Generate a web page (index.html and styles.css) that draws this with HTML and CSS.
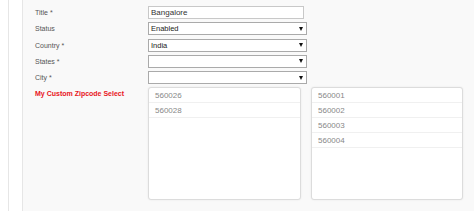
FILE: index.html
```html
<!DOCTYPE html>
<html lang="en">
  <head>
    <meta charset="UTF-8" />
    <meta name="viewport" content="width=device-width, initial-scale=1.0" />
    <title>zipcode select</title>
    <link rel="stylesheet" href="styles.css">
  </head>
  <body>
    <div class="rail">
      <div class="content">
        <div class="form">
          <label class="label">Title *</label>
          <div class="input">Bangalore</div>

          <label class="label">Status</label>
          <div class="select"><span>Enabled</span><i class="arrow"></i></div>

          <label class="label">Country *</label>
          <div class="select"><span>India</span><i class="arrow"></i></div>

          <label class="label">States *</label>
          <div class="select"><span></span><i class="arrow"></i></div>

          <label class="label">City *</label>
          <div class="select"><span></span><i class="arrow"></i></div>

          <label class="label custom">My Custom Zipcode Select</label>
          <div class="lists">
            <ul class="listbox left">
              <li>560026</li>
              <li>560028</li>
            </ul>
            <ul class="listbox right">
              <li>560001</li>
              <li>560002</li>
              <li>560003</li>
              <li>560004</li>
            </ul>
          </div>
        </div>
      </div>
    </div>
  </body>
</html>
```

FILE: styles.css
```css
html{
    box-sizing: border-box;
}
*, *:before, *:after{
    box-sizing: inherit;
}

body{
    margin: 0;
    background: #fff;
    font-family: "Liberation Sans", Arial, sans-serif;
}

.rail{
    margin-left: 8px;
    border-left: 1px solid #e6e6e6;
    padding-left: 13px;
    min-height: 100vh;
}
.content{
    border-left: 1px solid #e6e6e6;
    background: #f9f9f9;
    min-height: 100vh;
    padding: 6px 0 0 12px;
}

/* form grid */
.form{
    display: grid;
    grid-template-columns: 113px auto;
    grid-auto-rows: 13px;
    row-gap: 3.3px;
    align-items: center;
}
.label{
    font-size: 7px;
    color: #555;
}
.custom{
    align-self: start;
    padding-top: 3px;
    color: #e8141c;
    font-weight: bold;
}

.input{
    width: 156px;
    height: 13px;
    border: 1px solid #c8c8c8;
    background: #fff;
    font-size: 8px;
    line-height: 11px;
    padding-left: 2px;
    color: #333;
}
.select{
    width: 159px;
    height: 13px;
    border: 1px solid #aaa;
    background: #fff;
    font-size: 7.5px;
    color: #222;
    padding: 0 3px 0 2px;
    display: flex;
    align-items: center;
    justify-content: space-between;
}
.arrow{
    width: 0;
    height: 0;
    border-left: 2.5px solid transparent;
    border-right: 2.5px solid transparent;
    border-top: 4px solid #111;
}

/* zipcode lists */
.lists{
    grid-row: span 7;
    display: flex;
    gap: 10px;
    margin-top: 1px;
    height: 113px;
}
.listbox{
    margin: 0;
    padding: 0;
    list-style: none;
    height: 113px;
    background: #fff;
    border: 1px solid #dcdcdc;
    border-radius: 3px;
    box-shadow: 0 0 2px rgba(0,0,0,0.08);
}
.listbox.left{
    width: 153px;
}
.listbox.right{
    width: 152px;
}
.listbox li{
    height: 15px;
    line-height: 15px;
    padding-left: 6px;
    font-size: 8px;
    color: #888;
    border-bottom: 1px solid #f0f0f0;
}
```
